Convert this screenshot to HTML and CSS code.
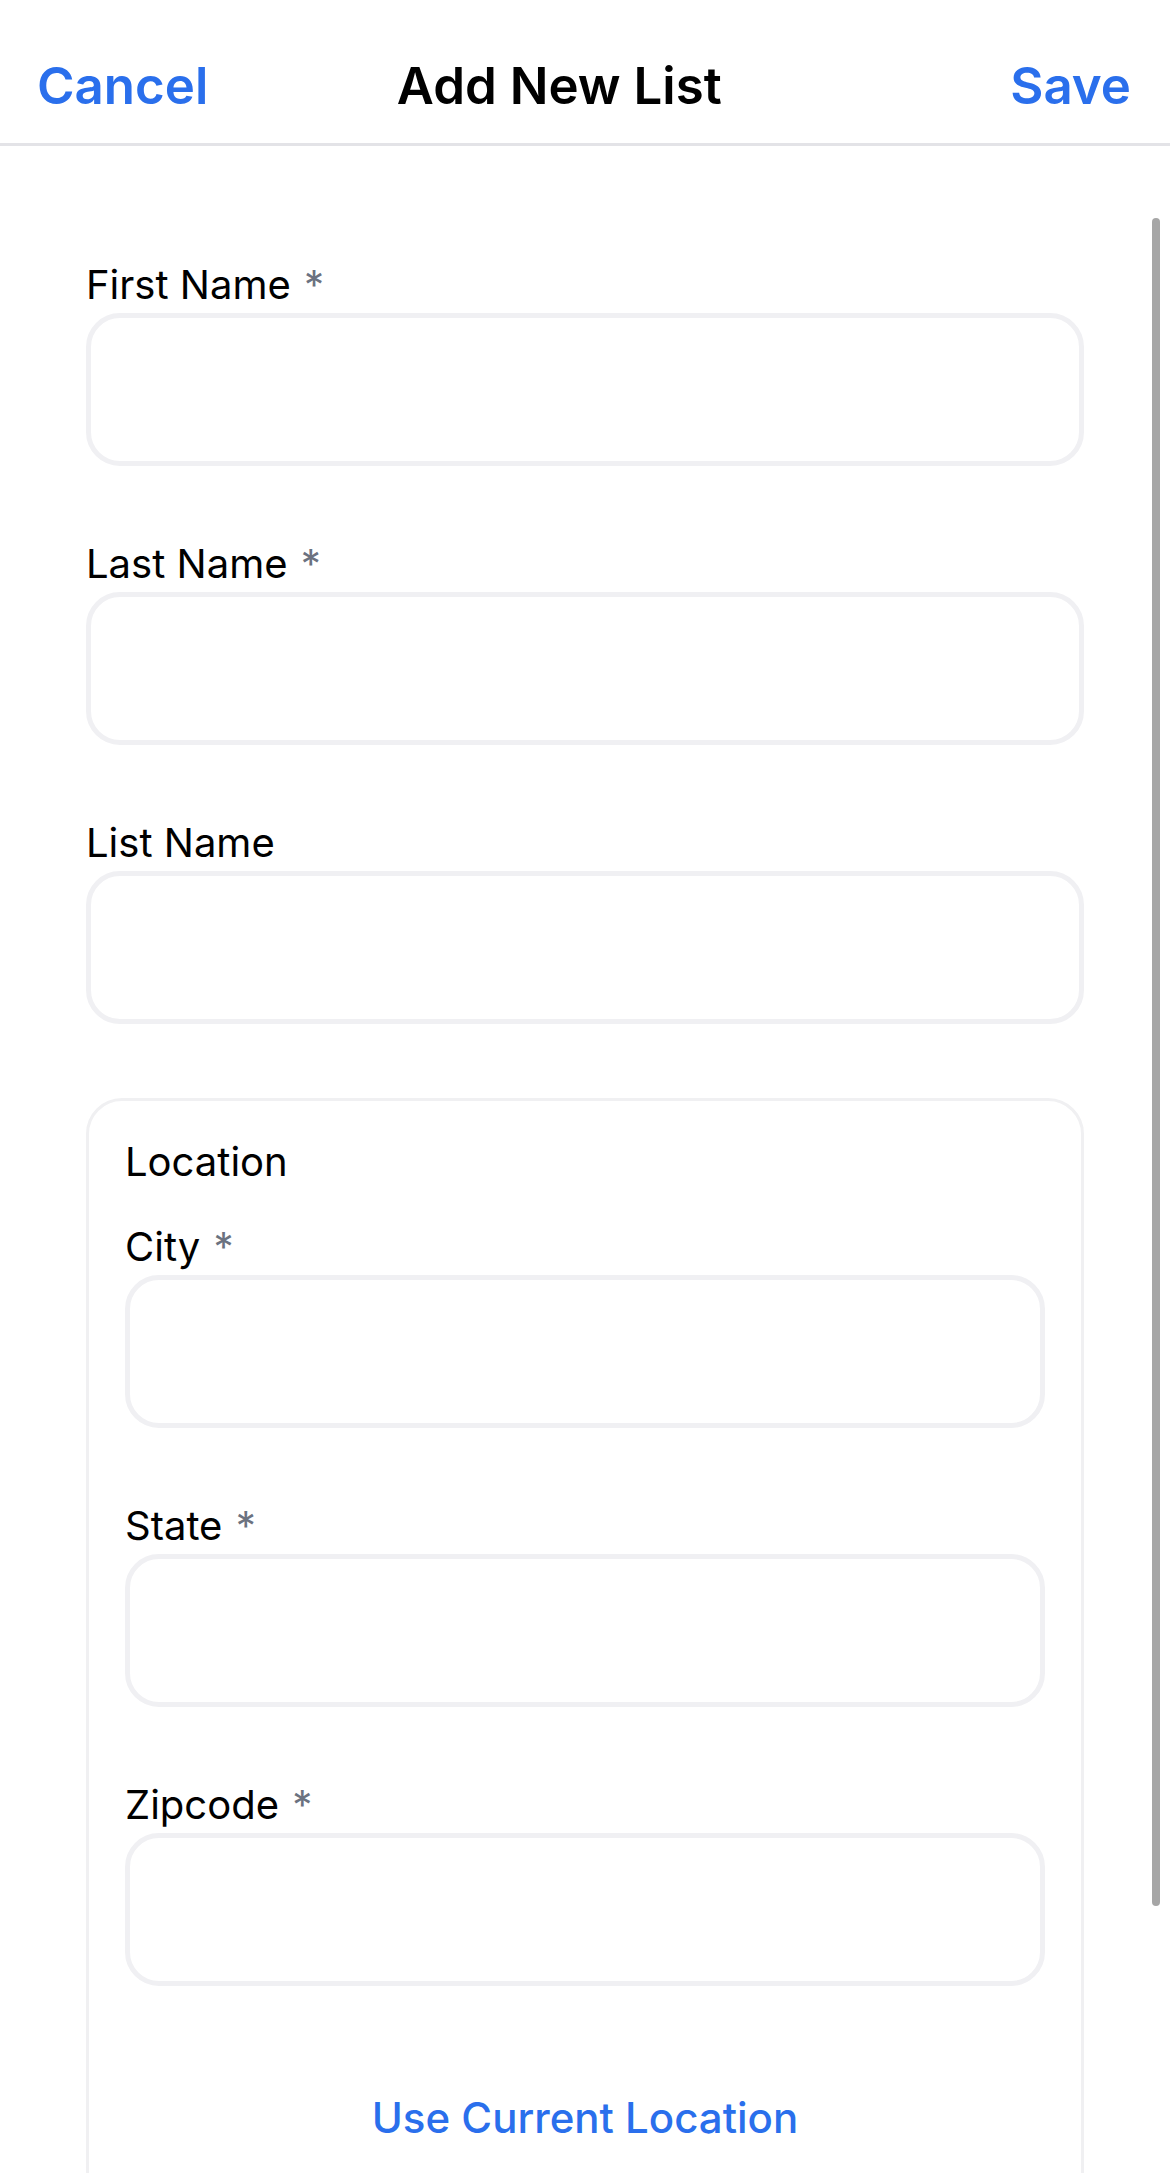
FILE: index.html
```html
<!DOCTYPE html>
<html lang="en">
    <head>
        <meta charset="UTF-8">
        <meta name="viewport" content="width=device-width, initial-scale=1.0">
        <title>Add New List</title>
        <link rel="stylesheet" href="styles.css">
    </head>
    <body>
        <div class="clTela">
            <!-- Barra do topo -->
            <div class="clTopo">
                <span class="clBtTopo">Cancel</span>
                <span class="clTituloTopo">Add New List</span>
                <span class="clBtTopo">Save</span>
            </div>
            <!-- Formulario -->
            <form class="clForm" action="">
                <div class="clCampo">
                    <label for="idFirstName">First Name <span class="clObrig">*</span></label>
                    <input type="text" id="idFirstName">
                </div>
                <div class="clCampo">
                    <label for="idLastName">Last Name <span class="clObrig">*</span></label>
                    <input type="text" id="idLastName">
                </div>
                <div class="clCampo">
                    <label for="idListName">List Name</label>
                    <input type="text" id="idListName">
                </div>
                <fieldset class="clLocal">
                    <div class="clTituloLocal">Location</div>
                    <div class="clCampo">
                        <label for="idCity">City <span class="clObrig">*</span></label>
                        <input type="text" id="idCity">
                    </div>
                    <div class="clCampo">
                        <label for="idState">State <span class="clObrig">*</span></label>
                        <input type="text" id="idState">
                    </div>
                    <div class="clCampo">
                        <label for="idZipcode">Zipcode <span class="clObrig">*</span></label>
                        <input type="text" id="idZipcode">
                    </div>
                    <button type="button" class="clBtLocal">Use Current Location</button>
                </fieldset>
            </form>
            <div class="clScroll"></div>
        </div>
    </body>
</html>
```

FILE: styles.css
```css
*{
    margin: 0px;
    padding: 0px;
    box-sizing: border-box;
}
body{
    background-color: white;
    font-family: Inter, "Noto Sans", sans-serif;
    color: black;
}
.clTela{
    position: relative;
    width: 1170px;
    height: 2173px;
    overflow: hidden;
}
.clTopo{
    display: flex;
    justify-content: space-between;
    align-items: flex-start;
    height: 146px;
    padding-top: 56px;
    padding-left: 37px;
    padding-right: 39px;
    border-bottom: 3px solid #e3e3e7;
    font-size: 51px;
    line-height: 60px;
}
.clBtTopo{
    color: #2a6fec;
    font-weight: 600;
}
.clTituloTopo{
    font-weight: 600;
    margin-right: 100px;
}
.clForm{
    padding-top: 115px;
    padding-left: 86px;
    padding-right: 86px;
}
.clCampo{
    display: flex;
    flex-direction: column;
    margin-bottom: 74px;
}
label, .clTituloLocal{
    font-size: 40px;
    line-height: 48px;
    margin-bottom: 4px;
}
.clObrig{
    color: #6b7280;
    margin-left: 2px;
}
input{
    height: 153px;
    border: 5px solid #f0f0f3;
    border-radius: 34px;
    background-color: white;
    outline: none;
}
.clLocal{
    border: 3px solid #f0f0f2;
    border-radius: 36px;
    padding-top: 37px;
    padding-left: 36px;
    padding-right: 36px;
    padding-bottom: 140px;
}
.clTituloLocal{
    margin-bottom: 37px;
}
.clBtLocal{
    display: block;
    margin: 107px auto 0px auto;
    background: none;
    border: none;
    color: #2a6fec;
    font-family: Inter, "Noto Sans", sans-serif;
    font-size: 42px;
    font-weight: 500;
    line-height: 50px;
}
.clScroll{
    position: absolute;
    right: 10px;
    top: 218px;
    width: 8px;
    height: 1688px;
    border-radius: 4px;
    background-color: #a6a6a6;
}
```
